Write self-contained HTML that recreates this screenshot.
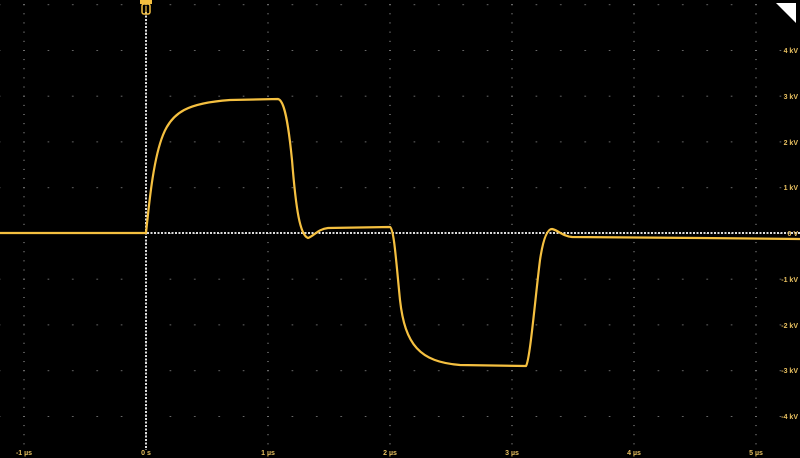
<!DOCTYPE html>
<html><head><style>
html,body{margin:0;padding:0;background:#000;width:800px;height:458px;overflow:hidden}
svg{display:block}
text{font-family:"Liberation Sans",sans-serif;font-size:7px;font-weight:bold;fill:#e8c060}
</style></head><body>
<svg width="800" height="458" viewBox="0 0 800 458">
<defs>
<pattern id="rows" width="24.4" height="45.75" patternUnits="userSpaceOnUse" patternTransform="translate(24,4.25)">
<rect x="-0.8" y="-0.8" width="1.6" height="1.6" fill="#888"/><rect x="23.6" y="-0.8" width="1.6" height="1.6" fill="#888"/>
</pattern>
<pattern id="cols" width="122" height="9.15" patternUnits="userSpaceOnUse" patternTransform="translate(24,4.25)">
<rect x="-0.8" y="-0.8" width="1.6" height="1.6" fill="#888"/><rect x="121.2" y="-0.8" width="1.6" height="1.6" fill="#888"/>
</pattern>
</defs>
<rect width="800" height="458" fill="#000"/>
<rect width="800" height="446" fill="url(#rows)"/>
<rect width="800" height="446" fill="url(#cols)"/>
<line x1="0" y1="233" x2="800" y2="233" stroke="#ddd" stroke-width="2" stroke-dasharray="2 1.5"/>
<line x1="146" y1="12" x2="146" y2="450" stroke="#ddd" stroke-width="2" stroke-dasharray="2 1.5"/>
<path d="M0 233 L146 233 C149 205 153 160 163 135 C172 112 188 103 230 100 L278 99 C284 100 288 120 292 160 C296 210 300 235 308 238 C314 236 318 229 328 228 L390 227 C394 229 396 260 400 300 C405 345 420 362 460 365 L526 366 C530 360 535 300 540 260 C543 240 547 229 552 229 C558 230 562 236 572 237 L700 238 L800 239"
 fill="none" stroke="#f5c040" stroke-width="2.2" stroke-linejoin="round"/>
<path d="M140 4 h12 v-4 h-12z" fill="#f5c040"/>
<rect x="142" y="4" width="8" height="10" rx="2" fill="none" stroke="#f5c040" stroke-width="1.5"/>
<line x1="146" y1="6" x2="146" y2="13" stroke="#f5c040" stroke-width="1.2"/>
<polygon points="776,3 796,3 796,23" fill="#fff"/>
<g text-anchor="end">
<text x="798" y="53">4 kV</text>
<text x="798" y="99">3 kV</text>
<text x="798" y="145">2 kV</text>
<text x="798" y="190">1 kV</text>
<text x="798" y="236">0 V</text>
<text x="798" y="282">-1 kV</text>
<text x="798" y="328">-2 kV</text>
<text x="798" y="373">-3 kV</text>
<text x="798" y="419">-4 kV</text>
</g>
<g text-anchor="middle">
<text x="24" y="455">-1 µs</text>
<text x="146" y="455">0 s</text>
<text x="268" y="455">1 µs</text>
<text x="390" y="455">2 µs</text>
<text x="512" y="455">3 µs</text>
<text x="634" y="455">4 µs</text>
<text x="756" y="455">5 µs</text>
</g>
</svg>
</body></html>
